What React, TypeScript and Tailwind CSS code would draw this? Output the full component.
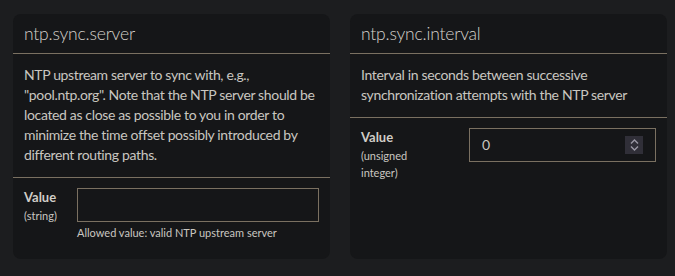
import React from "react";

function Spinner() {
  return (
    <div className="absolute right-[12px] top-[7px] w-[18px] h-[18px] bg-[#302f38] flex flex-col items-center justify-center gap-[2px]">
      <svg width="9" height="5" viewBox="0 0 9 5"><path d="M1 4.5 L4.5 1 L8 4.5" stroke="#9a98a4" strokeWidth="1.4" fill="none" /></svg>
      <svg width="9" height="5" viewBox="0 0 9 5"><path d="M1 0.5 L4.5 4 L8 0.5" stroke="#9a98a4" strokeWidth="1.4" fill="none" /></svg>
    </div>
  );
}

export default function App() {
  const font = { fontFamily: "Lato, 'Noto Sans', sans-serif" };
  return (
    <div className="w-[675px] h-[276px] bg-[#1c1d1f] pt-[14px] px-[13px] text-[#c9c6c0]" style={font}>
      <div className="flex gap-[20px]">
        <div className="w-[317px] h-[245px] bg-[#151618] rounded-[8px]">
          <div className="h-[40px] px-[11px] pt-[8px] text-[17.5px] leading-[24px] tracking-[-0.2px] font-light text-[#d4d1cb] border-b border-[#7a7061]">ntp.sync.server</div>
          <div className="px-[11px] pt-[11px] pb-[12px] text-[14px] leading-[20px] tracking-[-0.35px] border-b border-[#7a7061]">
            NTP upstream server to sync with, e.g., "pool.ntp.org". Note that the NTP server should be located as close as possible to you in order to minimize the time offset possibly introduced by different routing paths.
          </div>
          <div className="flex px-[11px] pt-[10px]">
            <div className="w-[54px]">
              <div className="text-[13px] font-bold leading-[18px] text-[#d0cdc7]">Value</div>
              <div className="text-[11px] leading-[18px] mt-[1px]">(string)</div>
            </div>
            <div>
              <div className="w-[242px] h-[34px] border border-[#7a7061]"></div>
              <div className="text-[11px] leading-[16px] mt-[3px]">Allowed value: valid NTP upstream server</div>
            </div>
          </div>
        </div>
        <div className="w-[317px] h-[245px] bg-[#151618] rounded-[8px]">
          <div className="h-[40px] px-[11px] pt-[8px] text-[17.5px] leading-[24px] tracking-[-0.2px] font-light text-[#d4d1cb] border-b border-[#7a7061]">ntp.sync.interval</div>
          <div className="px-[11px] pt-[11px] pb-[12px] text-[14px] leading-[20px] tracking-[-0.35px] border-b border-[#7a7061]">
            Interval in seconds between successive synchronization attempts with the NTP server
          </div>
          <div className="flex px-[11px] pt-[10px]">
            <div className="w-[108px]">
              <div className="text-[13px] font-bold leading-[18px] text-[#d0cdc7]">Value</div>
              <div className="text-[11px] leading-[17px] mt-[1px] w-[60px]">(unsigned integer)</div>
            </div>
            <div className="relative w-[187px] h-[34px] border border-[#7a7061] pl-[12px] text-[14px] leading-[32px] text-[#c9c6c0]">
              0
              <Spinner />
            </div>
          </div>
        </div>
      </div>
    </div>
  );
}
